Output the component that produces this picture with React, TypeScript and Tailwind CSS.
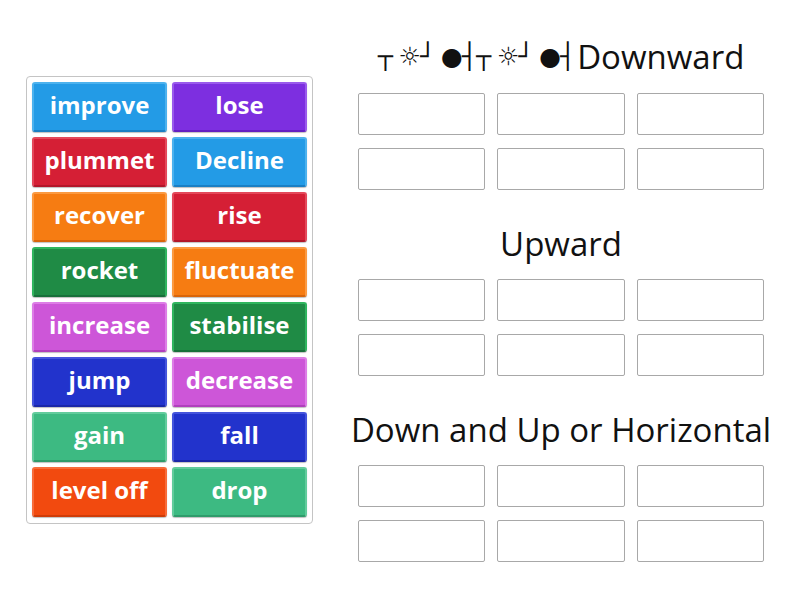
type Tile = { word: string; cls: string };

const tiles: Tile[] = [
  { word: "improve", cls: "bg-[#239be6] border-[#4cb2ee] border-b-[#1a7fc4]" },
  { word: "lose", cls: "bg-[#7d2fe0] border-[#9a5aec] border-b-[#6420c2]" },
  { word: "plummet", cls: "bg-[#d51f35] border-[#e4485a] border-b-[#b3162a]" },
  { word: "Decline", cls: "bg-[#239be6] border-[#4cb2ee] border-b-[#1a7fc4]" },
  { word: "recover", cls: "bg-[#f67c12] border-[#fb9a42] border-b-[#d9650a]" },
  { word: "rise", cls: "bg-[#d51f35] border-[#e4485a] border-b-[#b3162a]" },
  { word: "rocket", cls: "bg-[#1f8b45] border-[#2fb55e] border-b-[#17703a]" },
  { word: "fluctuate", cls: "bg-[#f67c12] border-[#fb9a42] border-b-[#d9650a]" },
  { word: "increase", cls: "bg-[#cd56d8] border-[#dd7de6] border-b-[#b13fbd]" },
  { word: "stabilise", cls: "bg-[#1f8b45] border-[#2fb55e] border-b-[#17703a]" },
  { word: "jump", cls: "bg-[#2233cc] border-[#4454dc] border-b-[#1a27a8]" },
  { word: "decrease", cls: "bg-[#cd56d8] border-[#dd7de6] border-b-[#b13fbd]" },
  { word: "gain", cls: "bg-[#3dba82] border-[#62cc9c] border-b-[#2f9c6b]" },
  { word: "fall", cls: "bg-[#2233cc] border-[#4454dc] border-b-[#1a27a8]" },
  { word: "level off", cls: "bg-[#f24a0f] border-[#f76c3a] border-b-[#cf3c08]" },
  { word: "drop", cls: "bg-[#3dba82] border-[#62cc9c] border-b-[#2f9c6b]" },
];

function DropGrid() {
  return (
    <div className="grid grid-cols-3 gap-x-[12px] gap-y-[13px]">
      {Array.from({ length: 6 }).map((_, i) => (
        <div key={i} className="h-[42px] border border-[#a8a8a8] rounded-[2px] bg-white" />
      ))}
    </div>
  );
}

function Heading({ children }: { children: React.ReactNode }) {
  return (
    <div className="h-[44px] flex items-center justify-center text-[33px] text-[#111] whitespace-nowrap">
      {children}
    </div>
  );
}

export default function App() {
  return (
    <div
      className="w-[800px] h-[600px] bg-white flex"
      style={{ fontFamily: '"Open Sans", "Noto Sans", sans-serif' }}
    >
      <div className="ml-[26px] mt-[76px] w-[287px] h-[448px] border border-[#c4c4c4] rounded-[4px] p-[5px] grid grid-cols-2 gap-[5px] content-start">
        {tiles.map((t) => (
          <div
            key={t.word}
            className={`h-[50px] rounded-[3px] border-[2px] flex items-center justify-center text-white font-bold text-[24px] leading-none shadow-[0_1px_1px_rgba(0,0,0,0.25)] ${t.cls}`}
          >
            <span className="-mt-[4px]">{t.word}</span>
          </div>
        ))}
      </div>

      <div className="ml-[45px] mt-[35px] w-[406px] flex flex-col">
        <Heading>
          <span className="font-['DejaVu_Sans'] text-[25px] tracking-[-1px] mr-[3px]">┬ ☼┘ ●┤┬ ☼┘ ●┤</span>
          Downward
        </Heading>
        <div className="mt-[14px]">
          <DropGrid />
        </div>

        <div className="mt-[32px]">
          <Heading>Upward</Heading>
        </div>
        <div className="mt-[13px]">
          <DropGrid />
        </div>

        <div className="mt-[32px]">
          <Heading>Down and Up or Horizontal</Heading>
        </div>
        <div className="mt-[13px]">
          <DropGrid />
        </div>
      </div>
    </div>
  );
}
